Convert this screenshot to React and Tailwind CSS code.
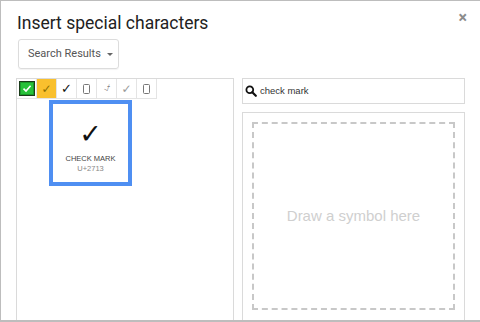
import React from 'react';

// Insert special characters dialog (cropped view)

function Tofu() {
  return <span className="block w-[7px] h-[10px] border border-[#777] rounded-[1.5px]" />;
}

const cells = [
  { ch: '✓', cls: 'text-[#8a6d00] text-[12px]', bg: 'bg-[#f9c02e]' },
  { ch: '✓', cls: 'text-[#111] text-[13px] font-bold', bg: '' },
  { tofu: true },
  { ch: '⍻', cls: 'text-[#888] text-[11px]', bg: '' },
  { ch: '✓', cls: 'text-[#999] text-[12px]', bg: '' },
  { tofu: true },
];

function GreenCheck() {
  return (
    <svg width="16" height="15" viewBox="0 0 16 15">
      <rect x="0.5" y="0.5" width="15" height="14" fill="#1a9a2a" stroke="#1b3b1b" />
      <rect x="2" y="2" width="12" height="11" fill="#27c13a" />
      <path d="M4.5 7.6 L7 10 L11.6 4.8" fill="none" stroke="#fff" strokeWidth="1.6" />
    </svg>
  );
}

export default function App() {
  return (
    <div className="relative w-[480px] h-[322px] bg-white border-t border-l border-b-2 border-[#bdbdbd] overflow-hidden font-['Roboto',sans-serif]">
      {/* Header */}
      <div className="flex items-start justify-between pl-[16px] pr-[13px] pt-[11px]">
        <h1 className="text-[17.5px] leading-[22px] text-[#222]">Insert special characters</h1>
        <span className="text-[16px] leading-[16px] -mt-[2px] text-[#8c8c8c] font-bold">×</span>
      </div>

      <div className="pl-[17px] pt-[5px]">
        <button className="flex items-center gap-[6px] w-[101px] h-[30px] pl-[9px] whitespace-nowrap border border-[#dcdcdc] rounded-[3px] shadow-[0_1px_1px_rgba(0,0,0,0.05)] text-[11px] text-[#555]">
          Search Results
          <span className="w-0 h-0 border-l-[3px] border-r-[3px] border-t-[3px] border-l-transparent border-r-transparent border-t-[#666]" />
        </button>
      </div>

      <div className="flex gap-[8px] pl-[15px] pt-[9px]">
        {/* Results */}
        <div className="relative w-[218px] h-[260px] border border-[#dadada]">
          <div className="flex">
            <div className="w-[20px] h-[20px] flex items-center justify-center border-r border-b border-[#e4e4e4]">
              <GreenCheck />
            </div>
            {cells.map((c, i) => (
              <div
                key={i}
                className={`w-[20px] h-[20px] flex items-center justify-center border-r border-b border-[#e4e4e4] font-['DejaVu_Sans',sans-serif] ${c.bg || ''}`}
              >
                {c.tofu ? <Tofu /> : <span className={c.cls}>{c.ch}</span>}
              </div>
            ))}
          </div>

          {/* Hover preview */}
          <div className="absolute left-[32px] top-[21px] w-[83px] h-[86px] border-[4px] border-[#4f8ff2] bg-white flex flex-col items-center pt-[16px]">
            <span className="text-[27px] leading-[28px] text-[#111] font-['DejaVu_Sans',sans-serif]">✓</span>
            <span className="mt-[6px] text-[7.5px] leading-[9px] text-[#444] font-['Liberation_Sans',sans-serif]">CHECK MARK</span>
            <span className="text-[7.5px] leading-[11px] text-[#888] font-['Liberation_Sans',sans-serif]">U+2713</span>
          </div>
        </div>

        {/* Search + draw */}
        <div className="flex flex-col gap-[8px] w-[223px]">
          <div className="h-[26px] border border-[#dadada] flex items-center pl-[2px] gap-[3px]">
            <svg width="12" height="12" viewBox="0 0 12 12">
              <circle cx="4.8" cy="4.8" r="3.4" fill="none" stroke="#111" strokeWidth="1.8" />
              <path d="M7.3 7.3 L10.8 10.8" stroke="#111" strokeWidth="2.2" strokeLinecap="round" />
            </svg>
            <span className="text-[9.5px] text-[#333] font-['Liberation_Sans',sans-serif]">check mark</span>
          </div>
          <div className="h-[226px] border border-[#dadada] p-[9px]">
            <div className="h-[188px] border-2 border-dashed border-[#c8c8c8] flex items-center justify-center">
              <span className="text-[15px] text-[#cfcfcf] font-['Liberation_Sans',sans-serif]">Draw a symbol here</span>
            </div>
          </div>
        </div>
      </div>
    </div>
  );
}
